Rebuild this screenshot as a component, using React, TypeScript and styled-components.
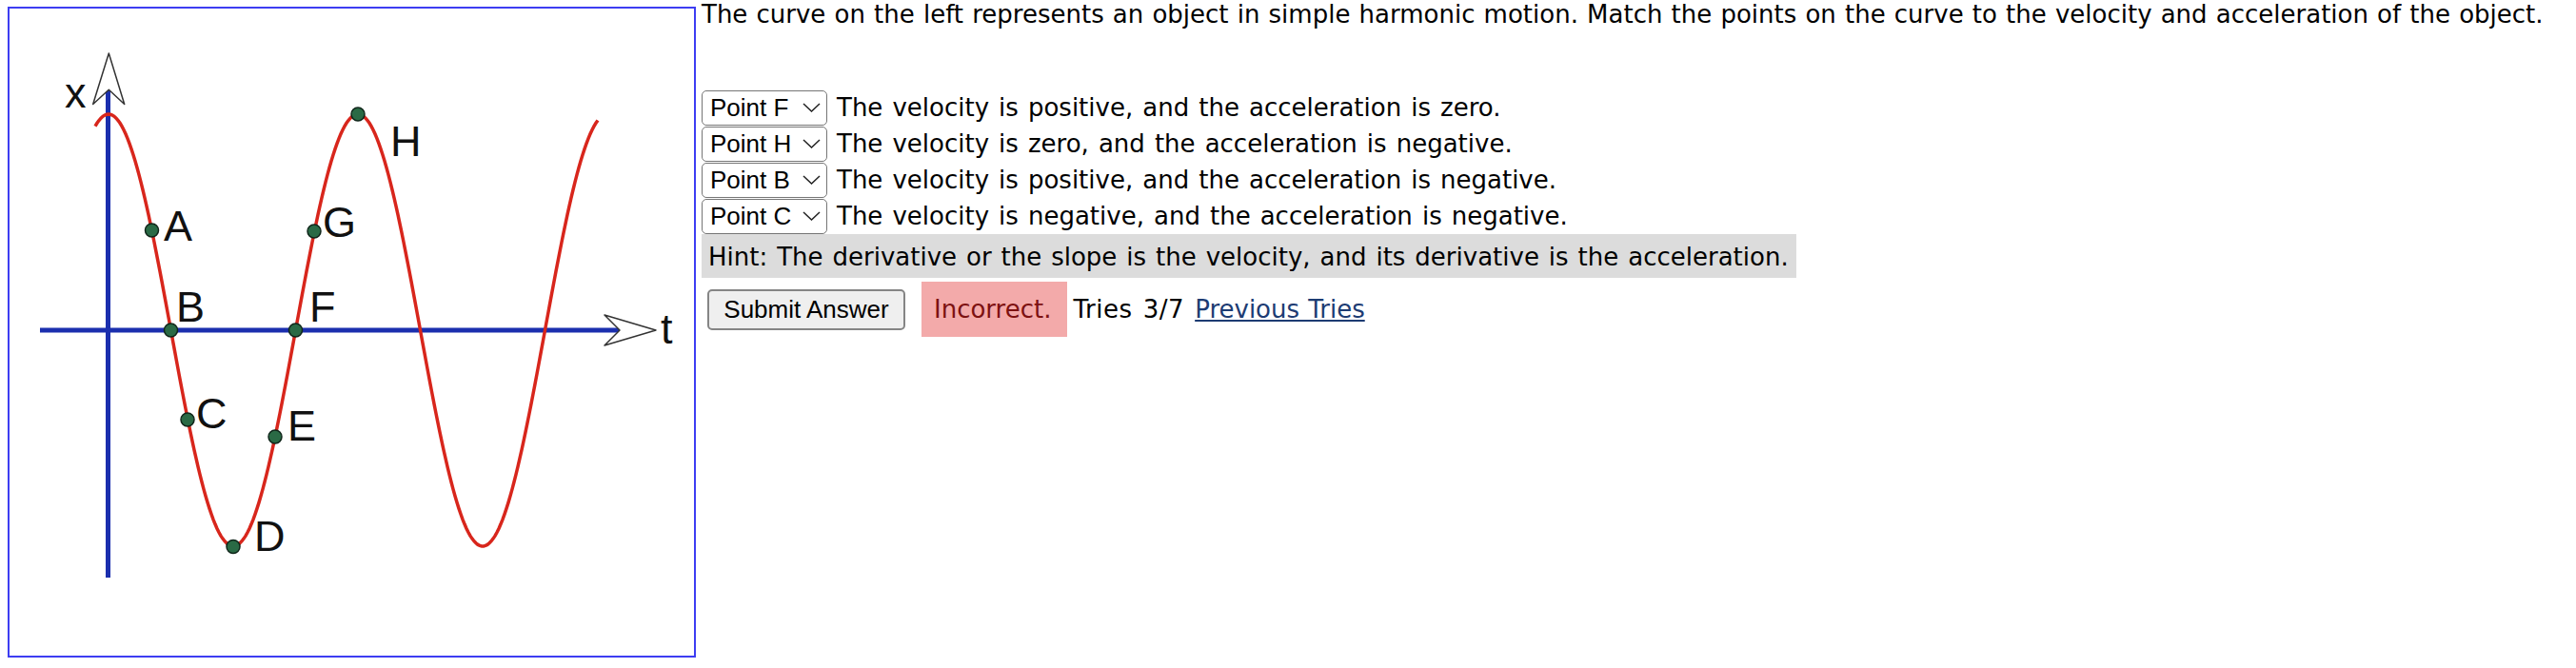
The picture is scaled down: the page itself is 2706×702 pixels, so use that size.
import React from "react";
import styled, { createGlobalStyle } from "styled-components";

const GlobalStyle = createGlobalStyle`
  body {
    margin: 0;
    background: #ffffff;
    font-family: "DejaVu Sans", Verdana, sans-serif;
  }
`;

const Page = styled.div`
  display: flex;
  align-items: flex-start;
  padding-left: 8px;
`;

const Figure = styled.div`
  flex-shrink: 0;
  margin-top: 7px;
  width: 719px;
  height: 680px;
  border: 2px solid #3d3df2;
  background: #ffffff;
`;

const Graph = styled.svg`
  display: block;
`;

const Content = styled.div`
  margin-left: 6px;
  display: flex;
  flex-direction: column;
  align-items: flex-start;
  font-size: 26px;
  word-spacing: 0.9px;
  color: #000000;
  white-space: nowrap;
`;

const Intro = styled.div`
  line-height: 30px;
`;

const Matches = styled.div`
  margin-top: 64px;
  display: flex;
  flex-direction: column;
`;

const MatchRow = styled.div`
  display: flex;
  align-items: center;
  gap: 10px;
  height: 38px;
`;

const MatchText = styled.span`
  word-spacing: 1.8px;
`;

const SelectWrap = styled.div`
  position: relative;
  display: flex;
`;

const PointSelect = styled.select`
  appearance: none;
  width: 132px;
  height: 37px;
  padding: 0 0 0 8px;
  border: 1px solid #767676;
  border-radius: 5px;
  background: #ffffff;
  color: #000000;
  font-family: "Liberation Sans", Arial, sans-serif;
  font-size: 26px;
`;

const Chevron = styled.svg`
  position: absolute;
  right: 7px;
  top: 50%;
  transform: translateY(-50%);
  pointer-events: none;
`;

const Hint = styled.div`
  background: #dcdcdc;
  padding: 9px 8px 7px 7px;
  line-height: 30px;
  word-spacing: 1.7px;
`;

const Actions = styled.div`
  margin-top: 4px;
  display: flex;
  align-items: center;
  height: 58px;
`;

const SubmitButton = styled.button`
  margin-left: 6px;
  width: 208px;
  height: 43px;
  padding: 0;
  border: 2px solid #858585;
  border-radius: 5px;
  background: #efefef;
  color: #000000;
  font-family: "Liberation Sans", Arial, sans-serif;
  font-size: 26px;
`;

const Feedback = styled.span`
  margin-left: 17px;
  padding: 14px 17px 14px 13px;
  line-height: 30px;
  background: #f3aaaa;
  color: #7d1111;
`;

const Tries = styled.span`
  margin-left: 6px;
  line-height: 30px;
  word-spacing: 2.4px;
  letter-spacing: 0.5px;
`;

const HistoryLink = styled.a`
  color: #1d3c73;
  text-decoration: underline;
  word-spacing: 0.9px;
  letter-spacing: 0;
`;

const Label = styled.text`
  font-family: "Liberation Sans", Arial, sans-serif;
  font-size: 45px;
  fill: #111111;
`;

// sine curve drawn in page coordinates
const curve = (() => {
  const parts: string[] = [];
  for (let x = 100; x <= 628; x += 2) {
    const y = 347 - 227 * Math.cos((2 * Math.PI * (x - 114)) / 262);
    parts.push(`${parts.length ? "L" : "M"}${x} ${y.toFixed(1)}`);
  }
  return parts.join(" ");
})();

const dots = [
  { x: 159.5, y: 242 },
  { x: 179.5, y: 347 },
  { x: 197, y: 441 },
  { x: 245, y: 574.5 },
  { x: 289, y: 459 },
  { x: 310.5, y: 347 },
  { x: 330, y: 243 },
  { x: 376, y: 120 },
];

const labels = [
  { t: "A", x: 172, y: 253 },
  { t: "B", x: 185, y: 338 },
  { t: "C", x: 206, y: 450 },
  { t: "D", x: 267, y: 579 },
  { t: "E", x: 302, y: 463 },
  { t: "F", x: 325, y: 338 },
  { t: "G", x: 339, y: 249 },
  { t: "H", x: 410, y: 164 },
];

const rows = [
  { value: "F", text: "The velocity is positive, and the acceleration is zero." },
  { value: "H", text: "The velocity is zero, and the acceleration is negative." },
  { value: "B", text: "The velocity is positive, and the acceleration is negative." },
  { value: "C", text: "The velocity is negative, and the acceleration is negative." },
];

const letters = ["A", "B", "C", "D", "E", "F", "G", "H"];

const MotionGraph = () => (
  <Graph width={719} height={680} viewBox="10 9 719 680">
    <line x1={113.5} y1={607} x2={113.5} y2={95} stroke="#1b2fae" strokeWidth={5} />
    <line x1={42} y1={347} x2={650} y2={347} stroke="#1b2fae" strokeWidth={5} />
    <polygon points="114.3,56 97.7,109.5 114.3,94.3 130.7,109.5" fill="#ffffff" stroke="#333333" strokeWidth={1.5} strokeLinejoin="round" />
    <polygon points="689,347 635,331 651,347 635,363" fill="#ffffff" stroke="#333333" strokeWidth={1.5} strokeLinejoin="round" />
    <path d={curve} fill="none" stroke="#d8261c" strokeWidth={3.5} />
    {dots.map((d, i) => (
      <circle key={i} cx={d.x} cy={d.y} r={7} fill="#2a6a45" stroke="#10261a" strokeWidth={1.5} />
    ))}
    <Label x={68} y={113}>x</Label>
    <Label x={694} y={361}>t</Label>
    {labels.map((l) => (
      <Label key={l.t} x={l.x} y={l.y}>
        {l.t}
      </Label>
    ))}
  </Graph>
);

export default function App() {
  return (
    <Page>
      <GlobalStyle />
      <Figure>
        <MotionGraph />
      </Figure>
      <Content>
        <Intro>
          The curve on the left represents an object in simple harmonic motion. Match the points on the curve to the
          velocity and acceleration of the object.
        </Intro>
        <Matches>
          {rows.map((r) => (
            <MatchRow key={r.value}>
              <SelectWrap>
                <PointSelect defaultValue={r.value}>
                  {letters.map((l) => (
                    <option key={l} value={l}>
                      Point {l}
                    </option>
                  ))}
                </PointSelect>
                <Chevron width={19} height={10} viewBox="0 0 19 10">
                  <polyline points="1,1 9.5,9 18,1" fill="none" stroke="#222222" strokeWidth={1.5} />
                </Chevron>
              </SelectWrap>
              <MatchText>{r.text}</MatchText>
            </MatchRow>
          ))}
        </Matches>
        <Hint>Hint: The derivative or the slope is the velocity, and its derivative is the acceleration.</Hint>
        <Actions>
          <SubmitButton>Submit Answer</SubmitButton>
          <Feedback>Incorrect.</Feedback>
          <Tries>
            Tries 3/7 <HistoryLink href="#">Previous Tries</HistoryLink>
          </Tries>
        </Actions>
      </Content>
    </Page>
  );
}
